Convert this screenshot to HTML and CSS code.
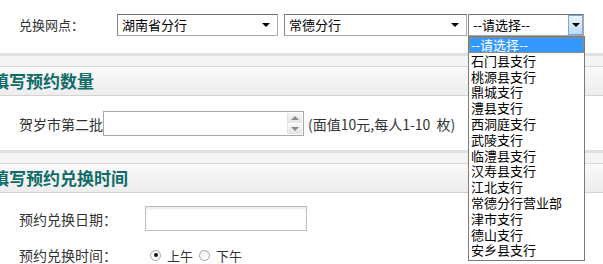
FILE: index.html
```html
<!DOCTYPE html>
<html lang="zh-CN">
<head>
    <meta charset="UTF-8">
    <title>兑换预约</title>
    <link rel="stylesheet" href="styles.css">
</head>
<body>

    <div class="top-row">
        <span class="top-label">兑换网点：</span>
        <div class="sel sel-province"><span>湖南省分行</span><i class="arrow"></i></div>
        <div class="sel sel-city"><span>常德分行</span><i class="arrow"></i></div>
        <div class="sel sel-branch">
            <span>--请选择--</span>
            <span class="sel-btn"><i class="arrow"></i></span>
            <!-- open option list -->
            <ul class="dropdown">
                <li class="active">--请选择--</li>
                <li>石门县支行</li>
                <li>桃源县支行</li>
                <li>鼎城支行</li>
                <li>澧县支行</li>
                <li>西洞庭支行</li>
                <li>武陵支行</li>
                <li>临澧县支行</li>
                <li>汉寿县支行</li>
                <li>江北支行</li>
                <li>常德分行营业部</li>
                <li>津市支行</li>
                <li>德山支行</li>
                <li>安乡县支行</li>
            </ul>
        </div>
    </div>

    <div class="section">
        <div class="band"></div>
        <h3 class="section-title">填写预约数量</h3>
        <div class="section-body">
            <div class="field">
                <span class="label label-qty">贺岁市第二批</span>
                <div class="num-input">
                    <span class="spin">
                        <span class="spin-btn"><i class="tri-up"></i></span>
                        <span class="spin-btn"><i class="tri-down"></i></span>
                    </span>
                </div>
                <span class="note">(面值10元,每人1-10&nbsp; 枚)</span>
            </div>
        </div>
    </div>

    <div class="section">
        <div class="band"></div>
        <h3 class="section-title">填写预约兑换时间</h3>
        <div class="section-body">
            <div class="field">
                <span class="label">预约兑换日期：</span>
                <div class="date-input"></div>
            </div>
            <div class="field field-time">
                <span class="label">预约兑换时间：</span>
                <span class="radio checked"></span><span class="radio-text">上午</span>
                <span class="radio"></span><span class="radio-text">下午</span>
            </div>
        </div>
    </div>

</body>
</html>
```

FILE: styles.css
```css
body {
    margin: 0;
    font-family: "Noto Sans CJK SC", "Liberation Sans", sans-serif;
    font-size: 13px;
    color: #333;
    background-color: #fff;
    overflow: hidden;
}

/* top row with the three selects */
.top-row {
    display: flex;
    align-items: flex-start;
    height: 53px;
    box-sizing: border-box;
    padding: 14px 0 0 19px;
}
.top-label {
    width: 98px;
    line-height: 22px;
    font-size: 13px;
}
.sel {
    position: relative;
    display: flex;
    align-items: center;
    justify-content: space-between;
    height: 22px;
    box-sizing: border-box;
    border: 1px solid #a9a9a9;
    border-top-color: #707070;
    border-left-color: #858585;
    padding: 0 7px 0 4px;
    font-size: 13px;
    line-height: 20px;
    color: #000;
    background-color: #fff;
}
.sel-province {
    width: 161px;
    margin-right: 6px;
}
.sel-city {
    width: 183px;
    margin-right: 1px;
}
.sel-branch {
    width: 116px;
    padding-right: 0;
}
.arrow {
    width: 0;
    height: 0;
    border-left: 4px solid transparent;
    border-right: 4px solid transparent;
    border-top: 4px solid #000;
}
.sel-btn {
    display: flex;
    align-items: center;
    justify-content: center;
    width: 15px;
    height: 20px;
    box-sizing: border-box;
    border: 1px solid #7fa6d3;
    background: linear-gradient(#eaf5ff, #b9dbf8);
}

.dropdown {
    position: absolute;
    top: 21px;
    left: -1px;
    width: 117px;
    height: 225px;
    box-sizing: border-box;
    margin: 0;
    padding: 0;
    list-style: none;
    border: 1px solid #7a7a7a;
    background-color: #fff;
    z-index: 5;
}
.dropdown li {
    height: 15.8px;
    line-height: 15.8px;
    padding-left: 2px;
    font-size: 13px;
    color: #000;
    white-space: nowrap;
}
.dropdown li.active {
    background-color: #3399ff;
    color: #fff;
    outline: 1px dotted #e07a1f;
    outline-offset: -1px;
}

/* sections */
.band {
    height: 10px;
    border-top: 3px solid #e0e0e0;
    background-color: #f4f4f4;
}
.section-title {
    margin: 0;
    height: 28px;
    line-height: 28px;
    border-top: 1px solid #d9d9d9;
    border-bottom: 1px solid #d3d3d3;
    background: linear-gradient(#f9f9f9, #ededed);
    font-size: 17px;
    font-weight: bold;
    color: #0f6b68;
    text-indent: -8px;
    white-space: nowrap;
}
.section-body {
    padding: 15px 0 14px 19px;
}
.section + .section .section-body {
    padding-top: 13px;
}

.field {
    display: flex;
    align-items: center;
    height: 25px;
}
.label {
    width: 126px;
    font-size: 14px;
    color: #333;
    white-space: nowrap;
}
.label-qty {
    width: 84px;
}

.num-input {
    display: flex;
    justify-content: flex-end;
    width: 201px;
    height: 25px;
    box-sizing: border-box;
    border: 1px solid #a8a8a8;
    padding: 1px;
}
.spin {
    display: flex;
    flex-direction: column;
    width: 15px;
}
.spin-btn {
    flex: 1;
    display: flex;
    align-items: center;
    justify-content: center;
    background: linear-gradient(#f6f6f6, #e4e4e4);
    border-left: 1px solid #e0e0e0;
}
.spin-btn + .spin-btn {
    border-top: 1px solid #fff;
}
.tri-up {
    border-left: 4px solid transparent;
    border-right: 4px solid transparent;
    border-bottom: 4px solid #8a8a8a;
}
.tri-down {
    border-left: 4px solid transparent;
    border-right: 4px solid transparent;
    border-top: 4px solid #8a8a8a;
}
.note {
    margin-left: 4px;
    font-size: 14px;
    color: #333;
    white-space: nowrap;
}

.date-input {
    width: 162px;
    height: 25px;
    box-sizing: border-box;
    border: 1px solid #bdbdbd;
    box-shadow: inset 0 2px 2px #ececec;
}

.field-time {
    margin-top: 14px;
    height: 20px;
}
.radio {
    position: relative;
    width: 11px;
    height: 11px;
    box-sizing: border-box;
    border: 1px solid #a3a3a3;
    border-radius: 50%;
    background: linear-gradient(#f2f2f2, #fff);
    margin: 0 6px 0 5px;
}
.radio-text + .radio {
    margin-left: 6px;
}
.radio.checked::after {
    content: "";
    position: absolute;
    left: 2.5px;
    top: 2.5px;
    width: 4px;
    height: 4px;
    border-radius: 50%;
    background-color: #111;
}
.radio-text {
    font-size: 13px;
    color: #333;
}
```
